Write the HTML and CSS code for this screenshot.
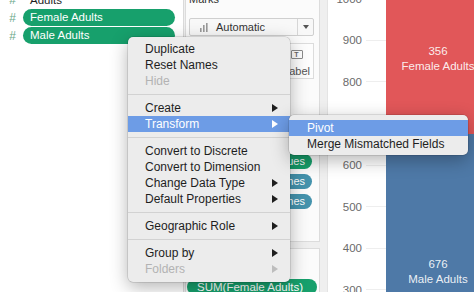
FILE: index.html
```html
<!DOCTYPE html>
<html lang="en">
<head>
  <meta charset="UTF-8" />
  <title>Workbook | Field Menu</title>
  <link rel="stylesheet" href="styles.css">
</head>
<body>
  <div class="app">
    <!-- data pane: measures list -->
    <aside class="data-pane">
      <ul class="fields">
        <li class="field"><span class="hash">#</span><span class="field-name">Adults</span></li>
        <li class="field"><span class="hash">#</span><span class="pill measure">Female Adults</span></li>
        <li class="field"><span class="hash">#</span><span class="pill measure">Male Adults</span></li>
      </ul>
    </aside>

    <!-- shelves / cards -->
    <section class="shelves">
      <div class="card marks">
        <div class="card-title">Marks</div>
        <div class="mark-type">
          <svg class="mark-icon" width="8" height="9" viewBox="0 0 8 9">
            <rect x="0" y="5" width="1.6" height="4" fill="#9a9a9a"/>
            <rect x="3" y="2" width="1.6" height="7" fill="#9a9a9a"/>
            <rect x="6" y="0" width="1.6" height="9" fill="#9a9a9a"/>
          </svg>
          <span>Automatic</span>
          <span class="caret"></span>
        </div>
        <div class="mark-buttons">
          <div class="mark-btn"><span class="btn-icon dots"></span>Color</div>
          <div class="mark-btn"><span class="btn-icon ring"></span>Size</div>
          <div class="mark-btn"><span class="btn-icon t-box">T</span>Label</div>
        </div>
        <div class="mark-pills">
          <span class="pill small measure">Values</span>
          <span class="pill small dimension">Names</span>
          <span class="pill small dimension">Names</span>
        </div>
      </div>
      <div class="card rows">
        <span class="pill measure sum">SUM(Female Adults)</span>
      </div>
    </section>

    <!-- view -->
    <main class="viz">
      <div class="axis">
        <div class="tick"><span class="tick-label">1000</span><span class="tick-line"></span></div>
        <div class="tick"><span class="tick-label">900</span><span class="tick-line"></span></div>
        <div class="tick"><span class="tick-label">800</span><span class="tick-line"></span></div>
        <div class="tick"><span class="tick-label">700</span><span class="tick-line"></span></div>
        <div class="tick"><span class="tick-label">600</span><span class="tick-line"></span></div>
        <div class="tick"><span class="tick-label">500</span><span class="tick-line"></span></div>
        <div class="tick"><span class="tick-label">400</span><span class="tick-line"></span></div>
        <div class="tick"><span class="tick-label">300</span><span class="tick-line"></span></div>
      </div>
      <div class="bar">
        <div class="seg female"><span>356</span><span>Female Adults</span></div>
        <div class="seg male"><span>676</span><span>Male Adults</span></div>
      </div>
    </main>
  </div>

  <!-- context menu -->
  <div class="menu context">
    <div class="menu-item">Duplicate</div>
    <div class="menu-item">Reset Names</div>
    <div class="menu-item disabled">Hide</div>
    <div class="sep"></div>
    <div class="menu-item has-sub">Create</div>
    <div class="menu-item has-sub active">Transform</div>
    <div class="sep"></div>
    <div class="menu-item">Convert to Discrete</div>
    <div class="menu-item">Convert to Dimension</div>
    <div class="menu-item has-sub">Change Data Type</div>
    <div class="menu-item has-sub">Default Properties</div>
    <div class="sep"></div>
    <div class="menu-item has-sub">Geographic Role</div>
    <div class="sep"></div>
    <div class="menu-item has-sub">Group by</div>
    <div class="menu-item has-sub disabled">Folders</div>
  </div>

  <div class="menu submenu">
    <div class="menu-item active">Pivot</div>
    <div class="menu-item">Merge Mismatched Fields</div>
  </div>
</body>
</html>
```

FILE: styles.css
```css
:root {
  --measure: #17a06c;
  --dimension: #4493ad;
  --female: #e15759;
  --male: #4e79a7;
  --menu-bg: #ececec;
  --highlight: #6d9ce6;
  --text: #1e1e1e;
}

* {
  box-sizing: border-box;
}

body {
  margin: 0;
  width: 474px;
  height: 292px;
  overflow: hidden;
  position: relative;
  background: #fff;
  color: var(--text);
  font-family: "Liberation Sans", Arial, sans-serif;
}

.app {
  display: flex;
  height: 292px;
  overflow: hidden;
}

/* data pane */
.data-pane {
  width: 184px;
  flex: none;
  border-right: 1px solid #dadada;
  background: #fff;
}

.fields {
  list-style: none;
  margin: -9px 0 0;
  padding: 0;
}

.field {
  display: flex;
  align-items: center;
  height: 17px;
  margin-bottom: 1px;
}

.hash {
  width: 23px;
  padding-left: 2px;
  text-align: center;
  font-size: 12px;
  color: #6aa88a;
}

.field-name {
  padding-left: 7px;
  font-size: 11.5px;
}

.pill {
  display: block;
  height: 17px;
  line-height: 17px;
  border-radius: 9px;
  color: #fff;
  font-size: 11px;
  white-space: nowrap;
  overflow: hidden;
}

.pill.measure {
  background: var(--measure);
}

.pill.dimension {
  background: var(--dimension);
}

.field .pill {
  width: 152px;
  padding-left: 7px;
  font-size: 11.5px;
}

/* shelves */
.shelves {
  width: 143px;
  flex: none;
  background: #efefef;
}

.card {
  width: 135px;
  margin-left: 1px;
  background: #fbfbfb;
  border: 1px solid #dcdcdc;
}

.card-title {
  height: 16px;
  line-height: 16px;
  font-size: 11px;
  color: #333;
}

.marks {
  margin-top: -14px;
  height: 256px;
  padding: 4px 5px 0 3px;
}

.mark-type {
  display: flex;
  align-items: center;
  height: 18px;
  margin-top: 11px;
  border: 1px solid #cfcfcf;
  border-radius: 2px;
  background: #f8f8f8;
  font-size: 11px;
  color: #333;
}

.mark-icon {
  margin: 0 8px 0 10px;
}

.caret {
  margin-left: auto;
  width: 16px;
  height: 100%;
  border-left: 1px solid #d6d6d6;
  position: relative;
}

.caret::after {
  content: "";
  position: absolute;
  left: 5px;
  top: 6px;
  border-top: 4px solid #555;
  border-left: 3px solid transparent;
  border-right: 3px solid transparent;
}

.mark-buttons {
  display: grid;
  grid-template-columns: repeat(3, 1fr);
  height: 36px;
  margin-top: 7px;
  border: 1px solid #dcdcdc;
  background: #fdfdfd;
}

.mark-btn {
  display: flex;
  flex-direction: column;
  align-items: center;
  gap: 6px;
  padding: 6px 0 0 8px;
  font-size: 11px;
  color: #555;
}

.btn-icon {
  width: 12px;
  height: 9px;
}

.dots {
  border-radius: 50%;
  background: #b9b9b9;
  width: 9px;
}

.ring {
  border: 1px solid #999;
  border-radius: 50%;
  width: 9px;
}

.t-box {
  border: 1px solid #8a8a8a;
  border-radius: 1px;
  font-size: 7px;
  font-weight: bold;
  line-height: 7px;
  text-align: center;
  color: #666;
}

.mark-pills {
  display: flex;
  flex-direction: column;
  align-items: flex-end;
  gap: 5px;
  margin-top: 75px;
  padding-right: 2px;
}

.pill.small {
  width: 96px;
  height: 15px;
  line-height: 15px;
  padding-right: 7px;
  text-align: right;
}

.rows {
  margin-top: 6px;
  height: 60px;
  padding: 30px 2px 0 1px;
}

.pill.sum {
  width: 130px;
  height: 16px;
  line-height: 16px;
  padding-left: 10px;
  font-size: 11.5px;
}

/* view */
.viz {
  flex: 1;
  display: flex;
  overflow: hidden;
  background: #fff;
  border-left: 1px solid #e4e4e4;
}

.axis {
  width: 58px;
  flex: none;
  margin-top: -22px;
}

.tick {
  display: flex;
  align-items: center;
  height: 41.6px;
}

.tick-label {
  width: 34px;
  text-align: right;
  font-size: 11.5px;
  color: #6b6b6b;
}

.tick-line {
  flex: 1;
  height: 1px;
  margin-left: 4px;
  background: #eeeeee;
}

.bar {
  width: 104px;
  flex: none;
  margin-top: -15px;
  display: flex;
  flex-direction: column;
}

.seg {
  flex: none;
  display: flex;
  flex-direction: column;
  align-items: center;
  justify-content: center;
  font-size: 11.5px;
  line-height: 15px;
  color: rgba(255, 255, 255, 0.9);
}

.seg.female {
  height: 149px;
  background: var(--female);
  padding-bottom: 2px;
}

.seg.male {
  height: 282px;
  background: var(--male);
  padding-bottom: 6px;
}

/* menus */
.menu {
  position: absolute;
  background: var(--menu-bg);
  border-radius: 5px;
  box-shadow: 0 0 0 0.5px rgba(0, 0, 0, 0.2), 0 5px 18px rgba(0, 0, 0, 0.3);
  font-size: 12px;
  color: var(--text);
}

.context {
  left: 128px;
  top: 37px;
  width: 162px;
  padding: 4px 0 5px;
}

.submenu {
  left: 289px;
  top: 115px;
  width: 179px;
  padding: 5px 0 3px;
}

.menu-item {
  display: flex;
  align-items: center;
  justify-content: space-between;
  height: 16px;
  padding: 0 12px 0 17px;
  white-space: nowrap;
}

.submenu .menu-item {
  padding-left: 18px;
}

.menu-item.has-sub::after {
  content: "";
  border-left: 6px solid #1e1e1e;
  border-top: 4px solid transparent;
  border-bottom: 4px solid transparent;
}

.menu-item.disabled {
  color: #b3b3b3;
}

.menu-item.disabled::after {
  border-left-color: #bdbdbd;
}

.menu-item.active {
  background: var(--highlight);
  color: #fff;
}

.menu-item.active::after {
  border-left-color: #fff;
}

.sep {
  height: 1px;
  margin: 5px 0;
  background: #d2d2d2;
}
```
